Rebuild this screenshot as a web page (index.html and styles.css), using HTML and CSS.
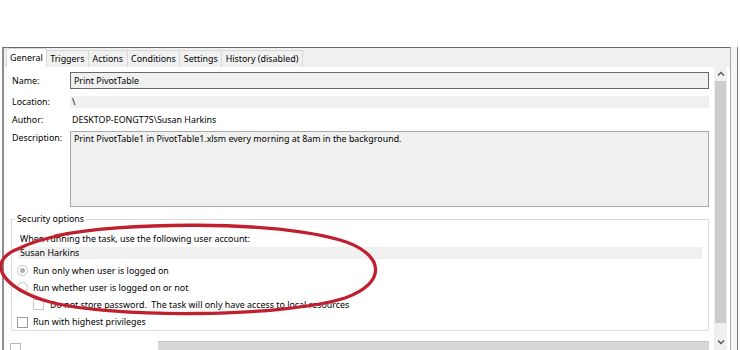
FILE: index.html
```html
<!DOCTYPE html>
<html>
<head>
<meta charset="utf-8">
<link rel="stylesheet" href="styles.css">
</head>
<body>
<div class="frame">
  <div class="win">
    <div class="tabs">
      <div class="tab sel">General</div>
      <div class="tab">Triggers</div>
      <div class="tab">Actions</div>
      <div class="tab">Conditions</div>
      <div class="tab">Settings</div>
      <div class="tab">History (disabled)</div>
    </div>
    <div class="main">
      <div class="content">
        <div class="row name-row">
          <div class="lbl">Name:</div>
          <div class="input">Print PivotTable</div>
        </div>
        <div class="row loc-row">
          <div class="lbl">Location:</div>
          <div class="ro">\</div>
        </div>
        <div class="row author-row">
          <div class="lbl">Author:</div>
          <div class="plain">DESKTOP-EONGT7S\Susan Harkins</div>
        </div>
        <div class="row desc-row">
          <div class="lbl top">Description:</div>
          <div class="desc">Print PivotTable1 in PivotTable1.xlsm every morning at 8am in the background.</div>
        </div>
        <fieldset class="group">
          <legend>Security options</legend>
          <div class="intro">When running the task, use the following user account:</div>
          <div class="acct">Susan Harkins</div>
          <div class="opt r1"><span class="radio on"></span><span>Run only when user is logged on</span></div>
          <div class="opt r2"><span class="radio"></span><span>Run whether user is logged on or not</span></div>
          <div class="opt r3"><span class="check dis"></span><span>Do not store password.&nbsp; The task will only have access to local resources</span></div>
          <div class="opt r4"><span class="check"></span><span>Run with highest privileges</span></div>
        </fieldset>
        <div class="bottom">
          <span class="check small"></span>
          <div class="bar"></div>
        </div>
      </div>
      <div class="vscroll">
        <div class="arrow"><svg width="8" height="6" viewBox="0 0 8 6"><path d="M1 4.5 L4 1.5 L7 4.5" fill="none" stroke="#555" stroke-width="1.4"/></svg></div>
        <div class="thumb"></div>
        <div class="spacer"></div>
        <div class="arrow"><svg width="8" height="6" viewBox="0 0 8 6"><path d="M1 1.5 L4 4.5 L7 1.5" fill="none" stroke="#555" stroke-width="1.4"/></svg></div>
      </div>
    </div>
  </div>
  <div class="edge"></div>
</div>
<svg class="annot" width="740" height="350" viewBox="0 0 740 350">
  <path d="M55 236 C120 222, 270 220, 340 240 C385 253, 388 283, 345 298 C280 318, 110 318, 50 302 C5 290, -18 262, 20 248 C30 243, 42 239, 62 235" fill="none" stroke="#c01f2e" stroke-width="3.3" stroke-linecap="round"/>
</svg>
</body>
</html>
```
FILE: styles.css
```css
* { box-sizing: border-box; }
html, body { margin: 0; padding: 0; }
body {
  width: 740px;
  height: 350px;
  overflow: hidden;
  position: relative;
  background: #fff;
  font-family: "Noto Sans", "Open Sans", sans-serif;
  font-size: 8.9px;
  color: #000;
}
.frame {
  display: flex;
  margin-top: 47px;
  margin-left: 2px;
  height: 303px;
}
.win {
  width: 729px;
  border-top: 1px solid #6c6c6c;
  border-left: 2px solid #8e8e8e;
  border-right: 1px solid #a8a8a8;
  display: flex;
  flex-direction: column;
}
.edge {
  width: 7px;
  background: #f6f6f6;
  border-right: 1px solid #777;
}
.tabs {
  height: 19px;
  flex: none;
  background: #f0f0f0;
  display: flex;
  align-items: flex-end;
  padding-left: 2px;
}
.tab {
  height: 17px;
  line-height: 16px;
  padding: 0 3.5px;
  border: 1px solid #d9d9d9;
  border-bottom: none;
  margin-left: -1px;
  background: #f0f0f0;
  white-space: nowrap;
}
.tab.sel {
  height: 19px;
  line-height: 17px;
  padding: 0 3px;
  margin-left: 0;
  background: #fff;
  position: relative;
}
.main {
  flex: 1;
  display: flex;
  background: #fff;
  min-height: 0;
}
.content {
  flex: 1;
  padding: 5px 5px 0 8px;
  display: flex;
  flex-direction: column;
}
.row { display: flex; align-items: center; }
.lbl { width: 58px; flex: none; line-height: 12px; }
.lbl.top { align-self: flex-start; padding-top: 1px; }
.input {
  flex: 1;
  height: 17px;
  line-height: 15px;
  padding-left: 3px;
  border: 1px solid #6a6a6a;
  background: #f0f0f0;
}
.loc-row { margin-top: 7px; }
.ro {
  flex: 1;
  height: 12px;
  line-height: 12px;
  padding-left: 2px;
  background: #f0f0f0;
}
.author-row { margin-top: 6px; height: 12px; }
.plain { padding-left: 2px; line-height: 12px; }
.desc-row { margin-top: 5px; }
.desc {
  flex: 1;
  height: 76px;
  padding: 1px 3px;
  line-height: 12px;
  border: 1px solid #a8a8a8;
  background: #f0f0f0;
}
.group {
  margin: 6px 0 0 -1px;
  padding: 0;
  min-width: 0;
  border: 1px solid #dcdcdc;
}
.group legend {
  padding: 0 2px;
  margin-left: 3px;
  line-height: 12px;
}
.intro { margin-top: 8px; padding-left: 8px; line-height: 12px; }
.acct {
  margin: 2px 6px 0 6px;
  height: 12px;
  line-height: 12px;
  padding-left: 2px;
  background: #f0f0f0;
}
.opt {
  display: flex;
  align-items: center;
  height: 17px;
  line-height: 12px;
}
.r1 { margin-top: 3px; }
.r4 { margin-top: 1px; height: 16px; }
.radio {
  width: 11px;
  height: 11px;
  margin: 0 5px 0 5px;
  border: 1px solid #c4c4c4;
  border-radius: 50%;
  display: flex;
  align-items: center;
  justify-content: center;
}
.radio.on::after {
  content: "";
  width: 5px;
  height: 5px;
  border-radius: 50%;
  background: #b0b0b0;
}
.check {
  width: 11px;
  height: 11px;
  margin: 0 5px 0 5px;
  border: 1px solid #9c9c9c;
  background: #fff;
}
.check.dis { margin-left: 21px; margin-right: 6px; border-color: #c8c8c8; }
.bottom {
  margin-top: 10px;
  display: flex;
  align-items: flex-start;
}
.check.small { margin: 2px 0 0 -2px; border-color: #b8b8b8; }
.bar {
  margin-left: auto;
  width: 551px;
  height: 12px;
  background: #d8d8d8;
  border-top: 1px solid #c8c8c8;
}
.vscroll {
  width: 13px;
  margin-right: 3px;
  background: #f0f0f0;
  display: flex;
  flex-direction: column;
}
.arrow {
  height: 12px;
  display: flex;
  align-items: center;
  justify-content: center;
  margin-top: 1px;
}
.arrow:last-child { margin-top: 0; margin-bottom: 2px; }
.thumb {
  margin: 1px 1px 0 1px;
  height: 242px;
  background: #cdcdcd;
}
.spacer { flex: 1; }
.annot {
  position: absolute;
  left: 0;
  top: 0;
  pointer-events: none;
}
```
